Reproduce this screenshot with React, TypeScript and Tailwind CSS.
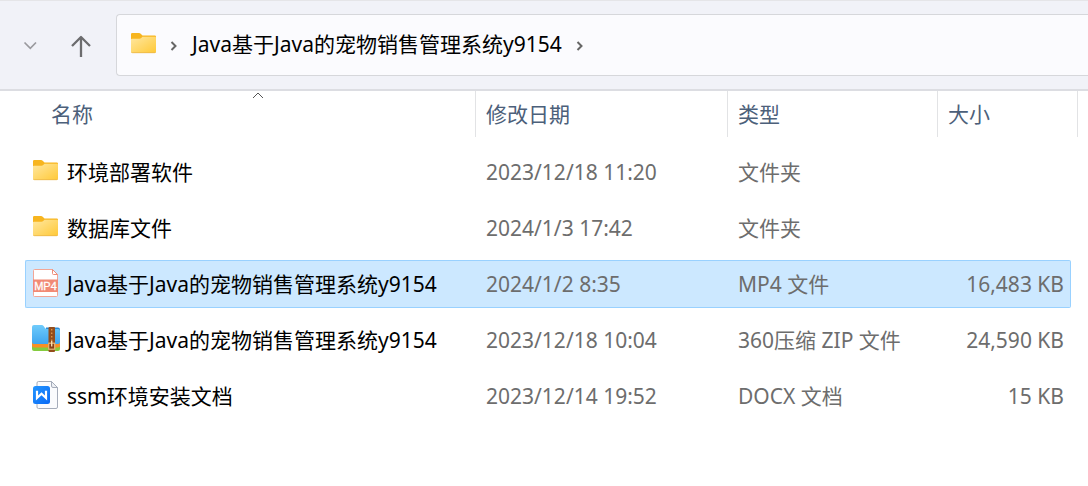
import { clsx } from "clsx";

type FileKind = "folder" | "mp4" | "zip" | "docx";

type FileEntry = {
  name: string;
  kind: FileKind;
  modified: string;
  type: string;
  size?: string;
  selected?: boolean;
};

const folderName = "Java基于Java的宠物销售管理系统y9154";

const files: FileEntry[] = [
  { name: "环境部署软件", kind: "folder", modified: "2023/12/18 11:20", type: "文件夹" },
  { name: "数据库文件", kind: "folder", modified: "2024/1/3 17:42", type: "文件夹" },
  {
    name: folderName,
    kind: "mp4",
    modified: "2024/1/2 8:35",
    type: "MP4 文件",
    size: "16,483 KB",
    selected: true,
  },
  {
    name: folderName,
    kind: "zip",
    modified: "2023/12/18 10:04",
    type: "360压缩 ZIP 文件",
    size: "24,590 KB",
  },
  {
    name: "ssm环境安装文档",
    kind: "docx",
    modified: "2023/12/14 19:52",
    type: "DOCX 文档",
    size: "15 KB",
  },
];

function FolderIcon() {
  return (
    <svg width="28" height="28" viewBox="0 0 28 28" className="mb-0.5 shrink-0" aria-hidden="true">
      <defs>
        <linearGradient id="folder-front" x1="0" y1="0" x2="1" y2="1">
          <stop offset="0" stopColor="#ffe7a0" />
          <stop offset="1" stopColor="#ffc937" />
        </linearGradient>
      </defs>
      <path d="M1 4.2Q1 3 2.2 3H9q1 0 1.700.7L12.500 5.500H24.800Q26 5.500 26 6.700V12H1Z" fill="#f7b51f" />
      <path d="M1 9.200Q1 8.700 2 8.700H9.500q1 0 1.700-.7L12.500 6.800H25Q26 6.800 26 7.800V21.500Q26 23 24.500 23H2.500Q1 23 1 21.500Z" fill="url(#folder-front)" />
      <path d="M1.300 22.200Q1.800 22.700 2.500 22.700H24.500Q25.300 22.700 25.700 22.200" fill="none" stroke="#eab54a" strokeWidth="0.8" />
    </svg>
  );
}

function Mp4Icon() {
  return (
    <svg width="28" height="28" viewBox="0 0 28 28" className="mb-0.5 shrink-0" aria-hidden="true">
      <path d="M2.500 0.500H20.500L25.500 5.500V26.500Q25.500 27.500 24.500 27.500H2.500Q1.500 27.500 1.500 26.500V1.500Q1.500 0.500 2.500 0.500Z" fill="#fff" stroke="#f3a696" />
      <path d="M20.500 0.500V4.500Q20.500 5.500 21.500 5.500H25.500Z" fill="#fff" stroke="#ee8c78" />
      <rect x="1" y="10.500" width="25" height="12.500" fill="#f18a75" />
      <text x="13.500" y="20.500" textAnchor="middle" fontSize="11" fontFamily="Liberation Sans, sans-serif" fill="#fff" stroke="#fff" strokeWidth="0.3">
        MP4
      </text>
    </svg>
  );
}

function ZipIcon() {
  return (
    <svg width="28" height="28" viewBox="0 0 28 28" className="mb-0.5 shrink-0" aria-hidden="true">
      <defs>
        <linearGradient id="zip-front" x1="0" y1="0" x2="0" y2="1">
          <stop offset="0" stopColor="#6fcbfb" />
          <stop offset="1" stopColor="#3ea5ef" />
        </linearGradient>
      </defs>
      <path d="M0 18H28V24Q28 26 26 26H2Q0 26 0 24Z" fill="#84cb3f" />
      <path d="M0 16H28V20.500Q28 22.500 26 22.500H2Q0 22.500 0 20.500Z" fill="#f88f24" />
      <path d="M14 2.500H26Q28 2.500 28 4.500V10H14Z" fill="#2b8bd8" />
      <path d="M0 2Q0 0 2 0H9.500Q11 0 11.800 1.200L13 3Q13.600 4 15 4H26Q28 4 28 6V17Q28 19 26 19H2Q0 19 0 17Z" fill="url(#zip-front)" />
      <rect x="16.500" y="2" width="6.500" height="25" rx="1" fill="#934d1b" />
      <path d="M19.700 4V16" stroke="#dc9548" strokeWidth="1.400" strokeDasharray="1.500 2" />
      <rect x="16.700" y="18.200" width="6" height="6" fill="#8b3f13" stroke="#e9b873" strokeWidth="1.200" />
      <path d="M19.700 16V21.500" stroke="#f8dca8" strokeWidth="1.400" />
    </svg>
  );
}

function DocxIcon() {
  return (
    <svg width="28" height="28" viewBox="0 0 28 28" className="mb-0.5 shrink-0" aria-hidden="true">
      <defs>
        <linearGradient id="docx-badge" x1="0" y1="0" x2="1" y2="1">
          <stop offset="0" stopColor="#2496ff" />
          <stop offset="1" stopColor="#0869f5" />
        </linearGradient>
      </defs>
      <path d="M6.500 0.500H19.500L25.500 6.500V26Q25.500 27.500 24 27.500H6.500Q5 27.500 5 26V2Q5 0.500 6.500 0.500Z" fill="#fafbfd" stroke="#a5acba" />
      <path d="M19.500 0.500V5Q19.500 6.500 21 6.500H25.500Z" fill="#eef0f4" stroke="#a5acba" />
      <rect x="1" y="5" width="17" height="18" rx="2.500" fill="url(#docx-badge)" />
      <path d="M5 9.800V17L9.500 12.800L14 17V9.800" fill="none" stroke="#fff" strokeWidth="2.200" />
    </svg>
  );
}

function FileIcon({ kind }: { kind: FileKind }) {
  if (kind === "mp4") return <Mp4Icon />;
  if (kind === "zip") return <ZipIcon />;
  if (kind === "docx") return <DocxIcon />;
  return <FolderIcon />;
}

function CrumbArrow() {
  return (
    <svg width="8" height="10" viewBox="0 0 8 10" className="mt-0.5" aria-hidden="true">
      <path d="M1.500 1L5.500 5L1.500 9" fill="none" stroke="#666" strokeWidth="2" />
    </svg>
  );
}

function HeaderCell({ label, sorted }: { label: string; sorted?: boolean }) {
  return (
    <th scope="col" className={clsx("p-0 pb-[7px] font-normal", sorted && "pl-4")}>
      <button className="relative flex h-[46px] w-full items-center border-r border-[#e2e3e5] pl-2.5 text-[#4c607a]">
        {label}
        {sorted && (
          <svg
            width="12"
            height="7"
            viewBox="0 0 12 7"
            className="absolute top-px left-1/2 -translate-x-1/2"
            aria-hidden="true"
          >
            <path d="M1 6L6 1L11 6" fill="none" stroke="#555" strokeWidth="1" />
          </svg>
        )}
      </button>
    </th>
  );
}

function FileRow({ file }: { file: FileEntry }) {
  const cell = clsx(
    "flex h-12 items-center border-y",
    file.selected ? "border-[#99d1ff] bg-[#cce8ff]" : "border-transparent"
  );

  return (
    <tr aria-selected={!!file.selected} className="text-[#6d6d6d]">
      <td className="p-0 py-1">
        <div className={clsx(cell, "gap-[7px] rounded-l-xs border-l pl-1.5 text-black")}>
          <FileIcon kind={file.kind} />
          <span className="whitespace-nowrap">{file.name}</span>
        </div>
      </td>
      <td className="p-0 py-1">
        <div className={clsx(cell, "pl-2.5")}>{file.modified}</div>
      </td>
      <td className="p-0 py-1">
        <div className={clsx(cell, "pl-2.5")}>{file.type}</div>
      </td>
      <td className="p-0 py-1 pr-[7px]">
        <div className={clsx(cell, "justify-end rounded-r-xs border-r pr-1.5")}>{file.size}</div>
      </td>
    </tr>
  );
}

export default function App() {
  return (
    <div className="min-h-screen bg-white font-['Noto_Sans','Noto_Sans_CJK_SC',sans-serif] text-[21px] leading-7">
      {/* Navigation bar */}
      <header className="flex border-t border-b-2 border-t-[#e5e5e8] border-b-[#dcdde2] bg-[#f1f2f8] py-[13px]">
        <nav className="flex shrink-0 items-center gap-7 pr-6 pl-[22px]">
          <button aria-label="最近浏览的位置">
            <svg width="16" height="16" viewBox="0 0 16 16">
              <path d="M2.500 5.500L8.300 11.300L14 5.500" fill="none" stroke="#9a9a9e" strokeWidth="1.700" />
            </svg>
          </button>
          <button aria-label="上移">
            <svg width="26" height="26" viewBox="0 0 26 26">
              <path d="M15 25V5M6 14L15 5L24 14" fill="none" stroke="#6c6c6e" strokeWidth="2.300" strokeLinejoin="round" />
            </svg>
          </button>
        </nav>

        {/* Address bar */}
        <div className="flex h-[62px] flex-1 items-center rounded-l border border-r-0 border-[#d6d7db] bg-[#fbfbfe] pl-[13px] text-black">
          <FolderIcon />
          <div className="flex items-center gap-3.5 pl-3">
            <CrumbArrow />
            <a href="#" className="pb-0.5 whitespace-nowrap">
              {folderName}
            </a>
            <CrumbArrow />
          </div>
        </div>
      </header>

      {/* File list */}
      <main className="pr-2.5 pl-[25px]">
        <table className="w-full table-fixed border-separate border-spacing-0 text-left">
          <colgroup>
            <col />
            <col className="w-[252px]" />
            <col className="w-[210px]" />
            <col className="w-[140px]" />
          </colgroup>
          <thead>
            <tr>
              <HeaderCell label="名称" sorted />
              <HeaderCell label="修改日期" />
              <HeaderCell label="类型" />
              <HeaderCell label="大小" />
            </tr>
          </thead>
          <tbody>
            {files.map((file, i) => (
              <FileRow key={i} file={file} />
            ))}
          </tbody>
        </table>
      </main>
    </div>
  );
}
